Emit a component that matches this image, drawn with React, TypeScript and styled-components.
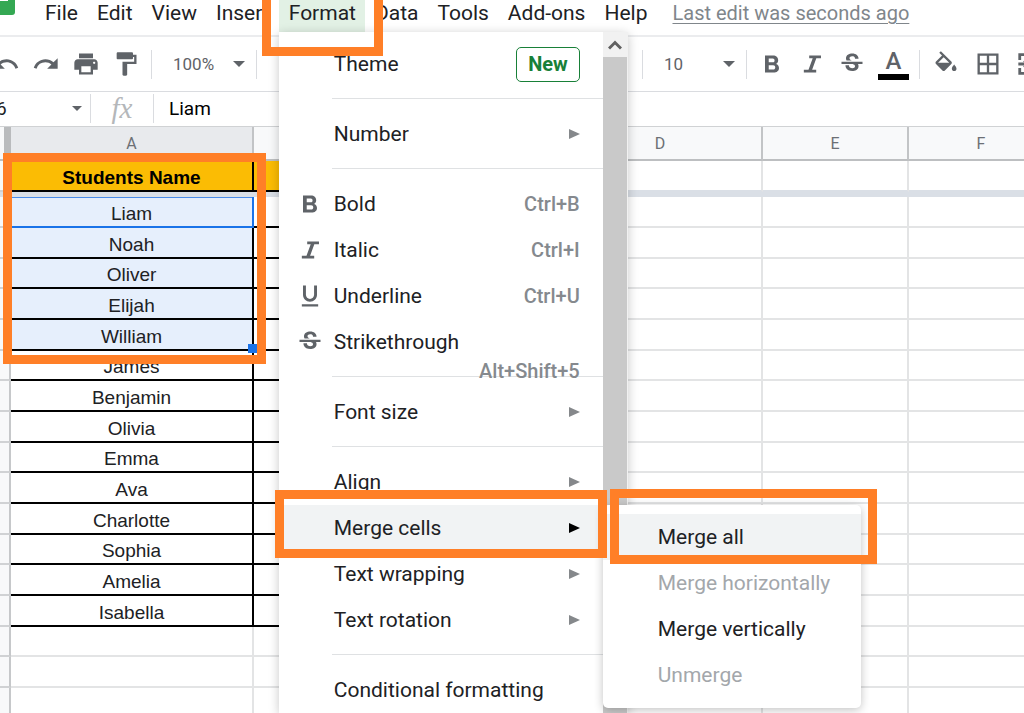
import React from "react";
import styled, { createGlobalStyle } from "styled-components";
import {
  MdBorderAll,
  MdFormatPaint,
  MdFormatUnderlined,
  MdPrint,
  MdRedo,
  MdStrikethroughS,
  MdUndo,
} from "react-icons/md";

const sans = `Roboto, "Liberation Sans", sans-serif`;
const cellFont = `"Liberation Sans", Arial, sans-serif`;

const GlobalStyle = createGlobalStyle`
  *, *::before, *::after { box-sizing: border-box; }
  body { margin: 0; background: #fff; font-family: ${sans}; color: #202124; }
  button, input { font: inherit; color: inherit; border: 0; background: none; padding: 0; margin: 0; }
  button { cursor: pointer; }
`;

const Page = styled.div`
  position: relative;
  display: flex;
  flex-direction: column;
  height: 100vh;
  overflow: hidden;
`;

/* Menu bar */

const MenuBar = styled.header`
  display: flex;
  flex: none;
  height: 37px;
  border-bottom: 2px solid #ebecee;
`;

const LogoBox = styled.div`
  flex: none;
  width: 35px;
`;

const Nav = styled.nav`
  display: flex;
  align-items: flex-start;
  white-space: nowrap;
`;

const NavItem = styled.div`
  position: relative;
`;

const NavButton = styled.button<{ $open?: boolean }>`
  display: block;
  height: 32px;
  padding: 0 9px 6px 10px;
  font-size: 21px;
  line-height: 26px;
  background: ${(p) => (p.$open ? "#e2f1e5" : "transparent")};
`;

const EditLink = styled.a`
  margin-left: 16px;
  font-size: 20px;
  line-height: 26px;
  color: #80868b;
  text-decoration: underline;
  text-decoration-thickness: 1px;
  text-underline-offset: 3px;
`;

/* Toolbar */

const Toolbar = styled.div`
  display: flex;
  flex: none;
  align-items: center;
  height: 55px;
  border-bottom: 1px solid #dadce0;
  color: #5f6368;
  overflow: hidden;
`;

const ToolGroup = styled.div<{ $width?: number; $pull?: number; $inset?: number; $gap?: number }>`
  display: flex;
  flex: none;
  align-items: center;
  gap: ${(p) => p.$gap ?? 12}px;
  width: ${(p) => (p.$width ? `${p.$width}px` : "auto")};
  padding-left: ${(p) => p.$inset ?? 0}px;
  margin-left: ${(p) => (p.$pull ? `-${p.$pull}px` : "0")};
`;

const ToolButton = styled.button`
  display: flex;
  flex: none;
  width: 28px;
  height: 28px;
  svg { width: 28px; height: 28px; }
`;

const ColorButton = styled.button`
  flex: none;
  width: 31px;
  height: 32px;
  border-bottom: 6px solid #000;
  font-size: 24px;
  font-weight: 500;
  line-height: 24px;
  text-align: center;
`;

const Divider = styled.span<{ $before?: number }>`
  flex: none;
  width: 1px;
  height: 29px;
  margin-left: ${(p) => p.$before ?? 0}px;
  background: #dadce0;
`;

const PickButton = styled.button<{ $width: number }>`
  display: flex;
  flex: none;
  align-items: center;
  justify-content: space-between;
  width: ${(p) => p.$width}px;
  padding: 0 11px 0 21px;
  font-size: 17px;
  line-height: 24px;
`;

/* Formula bar */

const FormulaBar = styled.div`
  display: flex;
  flex: none;
  align-items: center;
  height: 35px;
  padding-bottom: 2px;
  border-bottom: 1px solid #d0d2d4;
`;

const NameBox = styled.div`
  display: flex;
  flex: none;
  align-items: center;
  width: 91px;
  margin-left: -4px;
  padding-right: 5px;
  color: #202124;
`;

const NameInput = styled.input`
  flex: 1;
  min-width: 0;
  font-size: 19px;
`;

const Fx = styled.span`
  width: 62px;
  flex: none;
  text-align: center;
  font-family: "Liberation Serif", serif;
  font-style: italic;
  font-size: 29px;
  line-height: 32px;
  color: #b4b7ba;
`;

const FormulaInput = styled.input`
  flex: 1;
  min-width: 0;
  padding-left: 15px;
  font-size: 19px;
  color: #000;
`;

/* Sheet */

const SheetArea = styled.main`
  flex: 1;
  min-height: 0;
  overflow: hidden;
`;

const Sheet = styled.table`
  table-layout: fixed;
  width: 100%;
  min-width: 1055px;
  border-collapse: separate;
  border-spacing: 0;
`;

const Corner = styled.td`
  border-right: 7px solid #b9bbbd;
  border-bottom: 2px solid #bdbfc1;
  background: #f8f9fa;
  padding: 0;
`;

const ColHead = styled.th<{ $active?: boolean }>`
  height: 34px;
  padding: 0;
  border-right: 2px solid #c2c4c6;
  border-bottom: 2px solid #bdbfc1;
  background: ${(p) => (p.$active ? "#e8eaed" : "#f8f9fa")};
  font-size: 16px;
  font-weight: 400;
  color: #6c7075;
`;

const FirstRow = styled.tr`
  height: 31px;
`;

const FreezeCell = styled.td`
  height: 5px;
  padding: 0;
  background: #dadfe6;
`;

const Body = styled.tbody`
  tr { height: 31px; }
  tr:nth-child(3n) { height: 30px; }
`;

const RowHead = styled.td`
  padding: 0;
  border-right: 2px solid #c6c8ca;
  border-bottom: 2px solid #d0d2d4;
  background: #f8f9fa;
`;

type CellKind = "plain" | "boxed" | "title" | "frozen";

const Cell = styled.td<{ $kind: CellKind; $selected?: boolean; $inner?: boolean; $active?: boolean }>`
  position: relative;
  padding: 0;
  border-style: solid;
  border-width: 0 2px 2px 0;
  border-right-color: ${(p) =>
    (p.$kind === "boxed" || p.$kind === "title") && !p.$inner ? "#000" : "#e3e4e5"};
  border-bottom-color: ${(p) =>
    p.$kind === "plain" ? "#e3e4e5" : p.$kind === "frozen" ? "#dadfe6" : "#000"};
  background: ${(p) => (p.$kind === "title" ? "#fbbc04" : p.$selected ? "#e6effc" : "transparent")};
  font-family: ${cellFont};
  font-size: 19px;
  font-weight: ${(p) => (p.$kind === "title" ? 700 : 400)};
  line-height: 22px;
  text-align: center;
  color: ${(p) => (p.$kind === "title" ? "#000" : "#202124")};
  ${(p) =>
    p.$active &&
    `border-right-color: #1a73e8; border-bottom-color: #1a73e8; box-shadow: inset 0 1px 0 #4a8ce8;`}
`;

const CellText = styled.span`
  display: block;
  padding-top: 2px;
  margin-bottom: -2px;
`;

const FillHandle = styled.span`
  position: absolute;
  right: -5px;
  bottom: -4px;
  z-index: 1;
  width: 9px;
  height: 9px;
  background: #1a73e8;
`;

/* Drop-down menu */

const Dropdown = styled.div`
  position: absolute;
  top: 32px;
  left: 0;
  z-index: 2;
  display: flex;
  height: calc(100vh - 32px);
  background: #fff;
  box-shadow: 0 2px 10px rgba(0, 0, 0, 0.22);
`;

const MenuList = styled.div`
  width: 324px;
  padding-top: 9px;
  overflow: hidden;
`;

const MenuItem = styled.button<{ $on?: boolean }>`
  position: relative;
  display: flex;
  align-items: center;
  width: 100%;
  height: 46px;
  padding-right: 23px;
  background: ${(p) => (p.$on ? "#f1f3f4" : "transparent")};
  font-size: 21px;
  line-height: 24px;
  text-align: left;
  svg { flex: none; }
`;

const IconSlot = styled.span`
  display: flex;
  flex: none;
  width: 55px;
  padding-left: 17px;
  color: #5f6368;
  svg { width: 28px; height: 28px; }
`;

const Label = styled.span`
  flex: 1;
`;

const Shortcut = styled.span<{ $dropped?: boolean }>`
  font-size: 20px;
  font-weight: 500;
  color: #85898e;
  ${(p) => p.$dropped && `position: absolute; right: 23px; top: 40px;`}
`;

const Separator = styled.hr`
  height: 1px;
  margin: 11px 0 12px 53px;
  border: 0;
  background: #dfe1e3;
`;

const NewBadge = styled.span`
  padding: 0 11px;
  border: 1px solid #188038;
  border-radius: 5px;
  font-size: 20px;
  font-weight: 700;
  line-height: 33px;
  color: #188038;
`;

const ScrollTrack = styled.div`
  display: flex;
  flex-direction: column;
  width: 25px;
  border-right: 1px solid #f1f1f1;
  background: #f1f1f1;
`;

const ScrollButton = styled.button`
  display: flex;
  align-items: center;
  justify-content: center;
  height: 25px;
  background: #f1f1f1;
`;

const ScrollThumb = styled.div`
  flex: 1;
  background: #c9c9c9;
`;

const Submenu = styled.div`
  position: absolute;
  top: 473px;
  left: 324px;
  width: 258px;
  padding: 9px 0 10px;
  border-radius: 5px;
  background: #fff;
  box-shadow: 0 2px 10px rgba(0, 0, 0, 0.24);
`;

const SubItem = styled.button<{ $on?: boolean }>`
  display: block;
  width: 100%;
  height: 46px;
  padding-left: 55px;
  background: ${(p) => (p.$on ? "#f1f3f4" : "transparent")};
  font-size: 21px;
  line-height: 24px;
  text-align: left;
  &:disabled { color: #a3a7ab; }
`;

const Highlight = styled.div<{ $x: number; $y: number; $w: number; $h: number }>`
  position: absolute;
  z-index: 3;
  left: ${(p) => p.$x}px;
  top: ${(p) => p.$y}px;
  width: ${(p) => p.$w}px;
  height: ${(p) => p.$h}px;
  border: 9px solid #ff7f27;
  pointer-events: none;
`;

const Caret = ({ size = 12 }: { size?: number }) => (
  <svg width={size} height={size / 2} viewBox="0 0 12 6" fill="#5f6368" aria-hidden="true">
    <path d="M0 0h12L6 6z" />
  </svg>
);

const Arrow = ({ dark }: { dark?: boolean }) => (
  <svg width="11" height="12" viewBox="0 0 11 12" fill={dark ? "#000" : "#85888b"} aria-hidden="true">
    <path d="M0 1l11 5-11 5z" />
  </svg>
);

const BoldIcon = () => (
  <svg viewBox="0 0 24 24" fill="currentColor" fillRule="evenodd" aria-hidden="true">
    <path d="M6 4.7h6.9c2.6 0 4.4 1.6 4.4 4 0 1.5-.7 2.6-1.8 3.2 1.6.5 2.5 1.8 2.5 3.5 0 2.5-1.9 3.9-4.6 3.9H6zM9.2 7.3v3.3h3.4c1 0 1.6-.7 1.6-1.65s-.6-1.65-1.6-1.65zM9.2 13.1v3.6H13c1.1 0 1.8-.7 1.8-1.8s-.7-1.8-1.8-1.8z" />
  </svg>
);

const ItalicIcon = () => (
  <svg viewBox="0 0 24 24" fill="currentColor" aria-hidden="true">
    <path d="M9.6 4.8v2.3h3L9 16.9H5v2.3h10.6v-2.3h-3.5l3.6-9.8h4V4.8z" />
  </svg>
);

const FillIcon = () => (
  <svg viewBox="0 0 24 24" fill="currentColor" aria-hidden="true">
    <path d="M16.56 9.94L7.62 1 6.21 2.41l2.38 2.38-5.15 5.15c-.59.59-.59 1.54 0 2.12l5.5 5.5c.29.29.68.44 1.06.44s.77-.15 1.06-.44l5.5-5.5c.59-.58.59-1.53 0-2.12zM5.21 11L10 6.21 14.79 11H5.21zM19 12.5s-2 2.17-2 3.5c0 1.1.9 2 2 2s2-.9 2-2c0-1.33-2-3.5-2-3.5z" />
  </svg>
);

const MergeIcon = () => (
  <svg viewBox="0 0 24 24" fill="none" stroke="currentColor" strokeWidth="2.4" aria-hidden="true">
    <path d="M10 4H3.2v4.5M3.2 15.5V20H10M14 4h6.8v4.5M20.8 15.5V20H14M2 12h7M22 12h-7M7 9l3 3-3 3M17 9l-3 3 3 3" />
  </svg>
);

const Logo = () => (
  <svg width="16" height="16" viewBox="0 0 16 16" aria-hidden="true">
    <path d="M0 0h15v12a3 3 0 0 1-3 3H0z" fill="#34a853" />
    <path d="M0 0h8v1H0z" fill="#fff" />
  </svg>
);

const names = [
  "Liam", "Noah", "Oliver", "Elijah", "William", "James", "Benjamin",
  "Olivia", "Emma", "Ava", "Charlotte", "Sophia", "Amelia", "Isabella",
];
const blankRows = ["", "", ""];
const selectedCount = 5;
const columns = ["A", "B", "C", "D", "E", "F"];

const ColA = styled.col`width: 243px;`;
const ColB = styled.col`width: 159px;`;
const ColD = styled.col`width: 204px;`;
const ColBase = styled.col`width: 146px;`;
const ColRowHead = styled.col`width: 11px;`;

const FormatMenu = () => (
  <Dropdown role="menu" aria-label="Format">
    <MenuList>
      <MenuItem role="menuitem"><IconSlot /><Label>Theme</Label><NewBadge>New</NewBadge></MenuItem>
      <Separator />
      <MenuItem role="menuitem"><IconSlot /><Label>Number</Label><Arrow /></MenuItem>
      <Separator />
      <MenuItem role="menuitem"><IconSlot><BoldIcon /></IconSlot><Label>Bold</Label><Shortcut>Ctrl+B</Shortcut></MenuItem>
      <MenuItem role="menuitem"><IconSlot><ItalicIcon /></IconSlot><Label>Italic</Label><Shortcut>Ctrl+I</Shortcut></MenuItem>
      <MenuItem role="menuitem"><IconSlot><MdFormatUnderlined /></IconSlot><Label>Underline</Label><Shortcut>Ctrl+U</Shortcut></MenuItem>
      <MenuItem role="menuitem"><IconSlot><MdStrikethroughS /></IconSlot><Label>Strikethrough</Label><Shortcut $dropped>Alt+Shift+5</Shortcut></MenuItem>
      <Separator />
      <MenuItem role="menuitem"><IconSlot /><Label>Font size</Label><Arrow /></MenuItem>
      <Separator />
      <MenuItem role="menuitem"><IconSlot /><Label>Align</Label><Arrow /></MenuItem>
      <MenuItem role="menuitem" $on><IconSlot /><Label>Merge cells</Label><Arrow dark /></MenuItem>
      <MenuItem role="menuitem"><IconSlot /><Label>Text wrapping</Label><Arrow /></MenuItem>
      <MenuItem role="menuitem"><IconSlot /><Label>Text rotation</Label><Arrow /></MenuItem>
      <Separator />
      <MenuItem role="menuitem"><IconSlot /><Label>Conditional formatting</Label></MenuItem>
    </MenuList>
    <ScrollTrack>
      <ScrollButton aria-label="Scroll up">
        <svg width="14" height="10" viewBox="0 0 14 10" fill="none" stroke="#606060" strokeWidth="3" aria-hidden="true">
          <path d="M1 8.5l6-6 6 6" />
        </svg>
      </ScrollButton>
      <ScrollThumb />
    </ScrollTrack>
    <Submenu role="menu" aria-label="Merge cells">
      <SubItem role="menuitem" $on>Merge all</SubItem>
      <SubItem role="menuitem" disabled>Merge horizontally</SubItem>
      <SubItem role="menuitem">Merge vertically</SubItem>
      <SubItem role="menuitem" disabled>Unmerge</SubItem>
    </Submenu>
  </Dropdown>
);

const SheetGrid = () => (
  <Sheet>
    <colgroup>
      <ColRowHead />
      <ColA />
      <ColB />
      <ColBase />
      <ColD />
      <ColBase />
      <col />
    </colgroup>
    <thead>
      <tr>
        <Corner />
        {columns.map((c) => <ColHead key={c} scope="col" $active={c === "A"}>{c}</ColHead>)}
      </tr>
      <FirstRow>
        <RowHead />
        {columns.map((c, i) => (
          <Cell key={c} $kind={i < 3 ? "title" : "frozen"} $inner={i > 0}>
            {i === 0 && <CellText>Students Name</CellText>}
          </Cell>
        ))}
      </FirstRow>
      <tr><FreezeCell colSpan={columns.length + 1} /></tr>
    </thead>
    <Body>
      {[...names, ...blankRows].map((name, r) => (
        <tr key={r}>
          <RowHead />
          {columns.map((c, i) => (
            <Cell
              key={c}
              $kind={name && i < 3 ? "boxed" : "plain"}
              $inner={i > 0}
              $selected={i === 0 && r < selectedCount}
              $active={i === 0 && r === 0}
            >
              {i === 0 && name && <CellText>{name}</CellText>}
              {i === 0 && r === selectedCount - 1 && <FillHandle />}
            </Cell>
          ))}
        </tr>
      ))}
    </Body>
  </Sheet>
);

export default function App() {
  return (
    <Page>
      <GlobalStyle />
      <MenuBar>
        <LogoBox><Logo /></LogoBox>
        <Nav>
          {["File", "Edit", "View", "Insert"].map((t) => (
            <NavItem key={t}><NavButton>{t}</NavButton></NavItem>
          ))}
          <NavItem>
            <NavButton $open>Format</NavButton>
            <FormatMenu />
          </NavItem>
          {["Data", "Tools", "Add-ons", "Help"].map((t) => (
            <NavItem key={t}><NavButton>{t}</NavButton></NavItem>
          ))}
          <EditLink href="#history">Last edit was seconds ago</EditLink>
        </Nav>
      </MenuBar>

      <Toolbar>
        <ToolGroup $pull={8}>
          <ToolButton aria-label="Undo"><MdUndo /></ToolButton>
          <ToolButton aria-label="Redo"><MdRedo /></ToolButton>
          <ToolButton aria-label="Print"><MdPrint /></ToolButton>
          <ToolButton aria-label="Paint format"><MdFormatPaint /></ToolButton>
        </ToolGroup>
        <Divider $before={11} />
        <PickButton $width={104} aria-label="Zoom">100%<Caret /></PickButton>
        <Divider />
        <ToolGroup $width={385} />
        <Divider />
        <PickButton $width={103} aria-label="Font size">10<Caret /></PickButton>
        <Divider />
        <ToolGroup $width={172} $inset={11}>
          <ToolButton aria-label="Bold"><BoldIcon /></ToolButton>
          <ToolButton aria-label="Italic"><ItalicIcon /></ToolButton>
          <ToolButton aria-label="Strikethrough"><MdStrikethroughS /></ToolButton>
          <ColorButton aria-label="Text color">A</ColorButton>
        </ToolGroup>
        <Divider />
        <ToolGroup $inset={12} $gap={14}>
          <ToolButton aria-label="Fill color"><FillIcon /></ToolButton>
          <ToolButton aria-label="Borders"><MdBorderAll /></ToolButton>
          <ToolButton aria-label="Merge cells"><MergeIcon /></ToolButton>
        </ToolGroup>
      </Toolbar>

      <FormulaBar>
        <NameBox>
          <NameInput aria-label="Name box" defaultValue="6" />
          <Caret size={10} />
        </NameBox>
        <Divider $before={3} />
        <Fx>fx</Fx>
        <Divider />
        <FormulaInput aria-label="Formula" defaultValue="Liam" />
      </FormulaBar>

      <SheetArea><SheetGrid /></SheetArea>

      <Highlight $x={262} $y={-20} $w={121} $h={76} />
      <Highlight $x={3} $y={153} $w={263} $h={211} />
      <Highlight $x={275} $y={490} $w={332} $h={68} />
      <Highlight $x={610} $y={489} $w={267} $h={75} />
    </Page>
  );
}
